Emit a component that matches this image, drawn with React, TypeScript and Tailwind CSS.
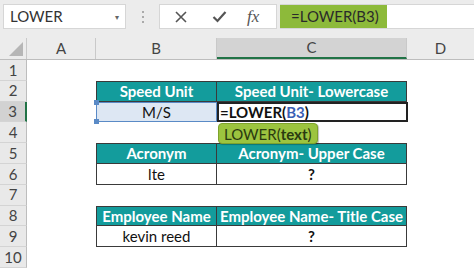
import React from "react";

const F = { fontFamily: "Lato, 'Open Sans', sans-serif" };

function RowHead({ n, active }: { n: number; active?: boolean }) {
  return (
    <div
      className={`w-[27px] shrink-0 flex items-center justify-center text-[15px] text-[#444] border-b border-[#d4d4d4] ${
        active ? "bg-[#d2d2d2] border-r-2 border-r-[#217346]" : "bg-[#e9e9e9] border-r border-r-[#bdbdbd]"
      }`}
    >
      {n}
    </div>
  );
}

function Row({ n, active, children }: { n: number; active?: boolean; children?: React.ReactNode }) {
  return (
    <div className="flex h-[20.8px]">
      <RowHead n={n} active={active} />
      <div className="w-[69px] shrink-0" />
      {children ?? <div className="flex-1" />}
    </div>
  );
}

function HeaderCells({ b, c }: { b: string; c: string }) {
  return (
    <>
      <div className="w-[121px] shrink-0 bg-[#139c9c] border border-[#3a3a3a] text-white font-bold text-[15px] flex items-center justify-center whitespace-nowrap">
        {b}
      </div>
      <div className="w-[190px] shrink-0 bg-[#139c9c] border border-l-0 border-[#3a3a3a] text-white font-bold text-[15px] flex items-center justify-center whitespace-nowrap">
        {c}
      </div>
    </>
  );
}

function DataCells({ b, c }: { b: string; c: string }) {
  return (
    <>
      <div className="w-[121px] shrink-0 bg-white border border-t-0 border-[#3a3a3a] text-[#111] text-[15px] flex items-center justify-center">
        {b}
      </div>
      <div className="w-[190px] shrink-0 bg-white border border-t-0 border-l-0 border-[#3a3a3a] text-[#111] font-bold text-[15px] flex items-center justify-center">
        {c}
      </div>
    </>
  );
}

export default function App() {
  return (
    <div className="w-[474px] h-[269px] overflow-hidden bg-white relative" style={F}>
      {/* formula bar */}
      <div className="h-[38px] bg-[#ececec] flex items-start pt-[4px]">
        <div className="ml-[3px] w-[123px] h-[25px] bg-white border border-[#d6d6d6] flex items-center pl-[6px] pr-[6px] text-[15px] text-[#333]">
          <span className="flex-1">LOWER</span>
          <span className="text-[8px] text-[#666]">▾</span>
        </div>
        <div className="w-[33px] h-[25px] flex flex-col items-center justify-center gap-[3px]">
          <span className="w-[2px] h-[2px] bg-[#aaa]" />
          <span className="w-[2px] h-[2px] bg-[#aaa]" />
          <span className="w-[2px] h-[2px] bg-[#aaa]" />
        </div>
        <div className="w-[118px] h-[25px] bg-white border border-[#d6d6d6] flex items-center text-[#555]">
          <svg width="14" height="14" viewBox="0 0 14 14" className="ml-[14px]">
            <path d="M2 2 L12 12 M12 2 L2 12" stroke="#555" strokeWidth="1.6" />
          </svg>
          <svg width="15" height="13" viewBox="0 0 15 13" className="ml-[24px]">
            <path d="M1.5 7 L5.5 11 L13.5 2" stroke="#555" strokeWidth="2.2" fill="none" />
          </svg>
          <span
            className="ml-[20px] text-[17px] italic text-[#555]"
            style={{ fontFamily: "'Liberation Serif', 'DejaVu Serif', serif" }}
          >
            fx
          </span>
        </div>
        <div className="ml-[3px] flex-1 h-[25px] bg-white border-y border-[#d6d6d6] flex items-stretch">
          <div className="w-[107px] bg-[#8dba3a] flex items-center pl-[11px] text-[15px] text-[#2a2a2a]">
            =LOWER(B3)
          </div>
        </div>
      </div>

      {/* column headers */}
      <div className="flex h-[22px] bg-[#ececec] border-b border-[#bdbdbd] text-[15px] text-[#444]">
        <div className="w-[27px] shrink-0 border-r border-[#c9c9c9] relative">
          <svg width="14" height="14" viewBox="0 0 14 14" className="absolute right-[3px] bottom-[3px]">
            <path d="M14 0 L14 14 L0 14 Z" fill="#b6b6b6" />
          </svg>
        </div>
        <div className="w-[69px] shrink-0 border-r border-[#c9c9c9] flex items-center justify-center">A</div>
        <div className="w-[121px] shrink-0 border-r border-[#c9c9c9] flex items-center justify-center">B</div>
        <div className="w-[190px] shrink-0 bg-[#d3d3d3] border-b-2 border-[#217346] border-r border-r-[#c9c9c9] flex items-center justify-center">
          C
        </div>
        <div className="flex-1 flex items-center justify-center">D</div>
      </div>

      {/* grid */}
      <div className="flex flex-col text-[#111]">
        <Row n={1} />
        <Row n={2}>
          <HeaderCells b="Speed Unit" c="Speed Unit- Lowercase" />
        </Row>
        <Row n={3} active>
          <div className="w-[121px] shrink-0 bg-[#dde7f3] border border-[#5a8ac6] text-[15px] flex items-center justify-center relative">
            M/S
            <span className="absolute -left-[3px] -top-[3px] w-[5px] h-[5px] bg-[#5a8ac6]" />
            <span className="absolute -left-[3px] -bottom-[3px] w-[5px] h-[5px] bg-[#5a8ac6]" />
          </div>
          <div className="w-[191px] shrink-0 bg-white border-2 border-[#222] text-[15px] font-bold flex items-center pl-[1px] relative">
            <span>=LOWER(</span>
            <span className="text-[#3b5fb5]">B3</span>
            <span>)</span>
          </div>
        </Row>
        <Row n={4}>
          <div className="w-[121px] shrink-0" />
          <div className="relative">
            <div className="absolute left-[1px] top-[1px] h-[21px] px-[5px] bg-[#9cc43f] border border-[#7ea32c] rounded-[4px] flex items-center text-[15px] text-[#2a3a10] whitespace-nowrap z-10 shadow-[1px_1px_1px_rgba(0,0,0,0.25)]">
              LOWER(<b>text</b>)
            </div>
          </div>
        </Row>
        <Row n={5}>
          <HeaderCells b="Acronym" c="Acronym- Upper Case" />
        </Row>
        <Row n={6}>
          <DataCells b="lte" c="?" />
        </Row>
        <Row n={7} />
        <Row n={8}>
          <HeaderCells b="Employee Name" c="Employee Name- Title Case" />
        </Row>
        <Row n={9}>
          <DataCells b="kevin reed" c="?" />
        </Row>
        <Row n={10} />
      </div>
    </div>
  );
}
